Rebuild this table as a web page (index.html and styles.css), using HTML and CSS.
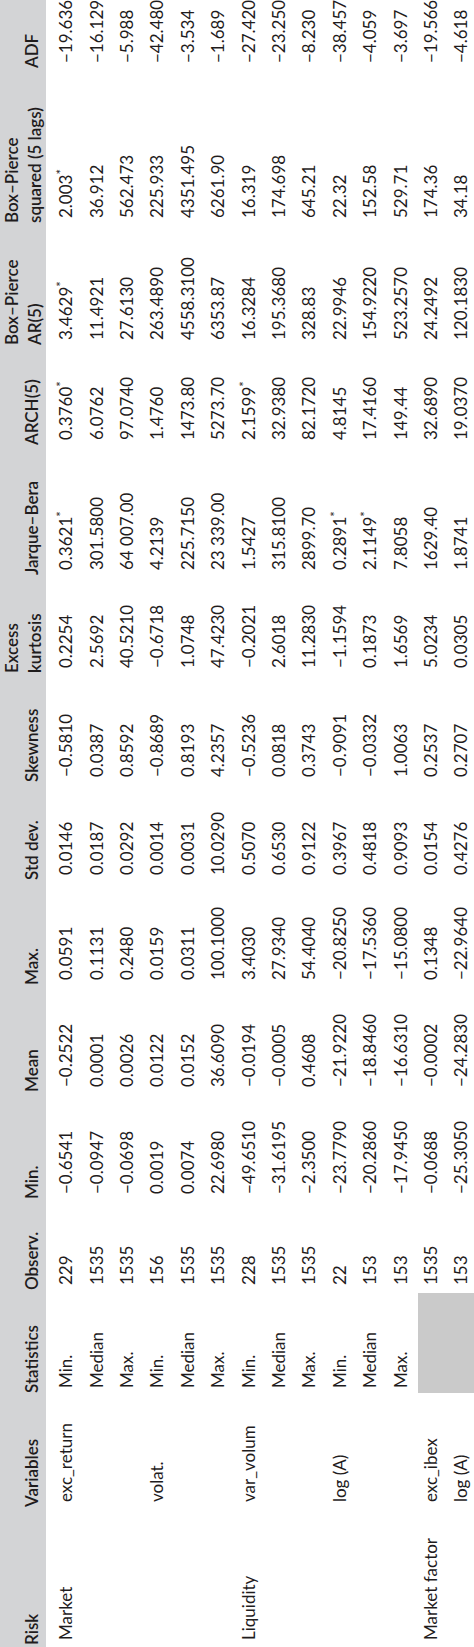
FILE: index.html
```html
<!DOCTYPE html>
<html lang="en">
<head>
<meta charset="utf-8">
<title>Descriptive statistics</title>
<link rel="stylesheet" href="styles.css">
</head>
<body>
<div class="page">
  <table class="stats">
    <colgroup>
      <col class="c-risk"><col class="c-var"><col class="c-stat"><col class="c-obs">
      <col class="c-min"><col class="c-mean"><col class="c-max"><col class="c-std">
      <col class="c-skew"><col class="c-kurt"><col class="c-jb"><col class="c-arch">
      <col class="c-bpar"><col class="c-bpsq"><col class="c-adf">
    </colgroup>
    <thead>
      <tr>
        <th>Risk</th><th>Variables</th><th>Statistics</th><th>Observ.</th>
        <th>Min.</th><th>Mean</th><th>Max.</th><th>Std dev.</th>
        <th>Skewness</th><th class="two">Excess<br>kurtosis</th><th>Jarque–Bera</th><th>ARCH(5)</th>
        <th class="two">Box–Pierce<br>AR(5)</th><th class="two">Box–Pierce<br>squared (5 lags)</th><th>ADF</th>
      </tr>
    </thead>
    <tbody>
      <tr><td>Market</td><td>exc_return</td><td>Min.</td><td>229</td><td>−0.6541</td><td>−0.2522</td><td>0.0591</td><td>0.0146</td><td>−0.5810</td><td>0.2254</td><td>0.3621<sup>*</sup></td><td>0.3760<sup>*</sup></td><td>3.4629<sup>*</sup></td><td>2.003<sup>*</sup></td><td>−19.636</td></tr>
      <tr><td></td><td></td><td>Median</td><td>1535</td><td>−0.0947</td><td>0.0001</td><td>0.1131</td><td>0.0187</td><td>0.0387</td><td>2.5692</td><td>301.5800</td><td>6.0762</td><td>11.4921</td><td>36.912</td><td>−16.129</td></tr>
      <tr><td></td><td></td><td>Max.</td><td>1535</td><td>−0.0698</td><td>0.0026</td><td>0.2480</td><td>0.0292</td><td>0.8592</td><td>40.5210</td><td>64 007.00</td><td>97.0740</td><td>27.6130</td><td>562.473</td><td>−5.988</td></tr>
      <tr><td></td><td>volat.</td><td>Min.</td><td>156</td><td>0.0019</td><td>0.0122</td><td>0.0159</td><td>0.0014</td><td>−0.8689</td><td>−0.6718</td><td>4.2139</td><td>1.4760</td><td>263.4890</td><td>225.933</td><td>−42.480</td></tr>
      <tr><td></td><td></td><td>Median</td><td>1535</td><td>0.0074</td><td>0.0152</td><td>0.0311</td><td>0.0031</td><td>0.8193</td><td>1.0748</td><td>225.7150</td><td>1473.80</td><td>4558.3100</td><td>4351.495</td><td>−3.534</td></tr>
      <tr><td></td><td></td><td>Max.</td><td>1535</td><td>22.6980</td><td>36.6090</td><td>100.1000</td><td>10.0290</td><td>4.2357</td><td>47.4230</td><td>23 339.00</td><td>5273.70</td><td>6353.87</td><td>6261.90</td><td>−1.689</td></tr>
      <tr><td>Liquidity</td><td>var_volum</td><td>Min.</td><td>228</td><td>−49.6510</td><td>−0.0194</td><td>3.4030</td><td>0.5070</td><td>−0.5236</td><td>−0.2021</td><td>1.5427</td><td>2.1599<sup>*</sup></td><td>16.3284</td><td>16.319</td><td>−27.420</td></tr>
      <tr><td></td><td></td><td>Median</td><td>1535</td><td>−31.6195</td><td>−0.0005</td><td>27.9340</td><td>0.6530</td><td>0.0818</td><td>2.6018</td><td>315.8100</td><td>32.9380</td><td>195.3680</td><td>174.698</td><td>−23.250</td></tr>
      <tr><td></td><td></td><td>Max.</td><td>1535</td><td>−2.3500</td><td>0.4608</td><td>54.4040</td><td>0.9122</td><td>0.3743</td><td>11.2830</td><td>2899.70</td><td>82.1720</td><td>328.83</td><td>645.21</td><td>−8.230</td></tr>
      <tr><td></td><td>log (A)</td><td>Min.</td><td>22</td><td>−23.7790</td><td>−21.9220</td><td>−20.8250</td><td>0.3967</td><td>−0.9091</td><td>−1.1594</td><td>0.2891<sup>*</sup></td><td>4.8145</td><td>22.9946</td><td>22.32</td><td>−38.457</td></tr>
      <tr><td></td><td></td><td>Median</td><td>153</td><td>−20.2860</td><td>−18.8460</td><td>−17.5360</td><td>0.4818</td><td>−0.0332</td><td>0.1873</td><td>2.1149<sup>*</sup></td><td>17.4160</td><td>154.9220</td><td>152.58</td><td>−4.059</td></tr>
      <tr><td></td><td></td><td>Max.</td><td>153</td><td>−17.9450</td><td>−16.6310</td><td>−15.0800</td><td>0.9093</td><td>1.0063</td><td>1.6569</td><td>7.8058</td><td>149.44</td><td>523.2570</td><td>529.71</td><td>−3.697</td></tr>
      <tr><td>Market factor</td><td>exc_ibex</td><td class="blank" rowspan="2"></td><td>1535</td><td>−0.0688</td><td>−0.0002</td><td>0.1348</td><td>0.0154</td><td>0.2537</td><td>5.0234</td><td>1629.40</td><td>32.6890</td><td>24.2492</td><td>174.36</td><td>−19.566</td></tr>
      <tr><td></td><td>log (A)</td><td>153</td><td>−25.3050</td><td>−24.2830</td><td>−22.9640</td><td>0.4276</td><td>0.2707</td><td>0.0305</td><td>1.8741</td><td>19.0370</td><td>120.1830</td><td>34.18</td><td>−4.618</td></tr>
    </tbody>
  </table>
</div>
</body>
</html>
```
FILE: styles.css
```css
html, body {
  margin: 0;
  padding: 0;
  background: #ffffff;
}

.page {
  width: 474px;
  height: 1647px;
  overflow: hidden;
  background: #ffffff;
}

.stats {
  border-collapse: collapse;
  border-spacing: 0;
  table-layout: fixed;
  width: 1677px;
  transform-origin: 0 0;
  transform: translateY(1648px) rotate(-90deg);
  font-family: Lato, "Noto Sans", "DejaVu Sans", sans-serif;
  font-size: 17px;
  color: #1f1c1d;
}

.c-risk { width: 138px; }
.c-var  { width: 114px; }
.c-stat { width: 103px; }
.c-obs  { width: 91px; }
.c-min  { width: 107px; }
.c-mean { width: 107px; }
.c-max  { width: 105px; }
.c-std  { width: 98px; }
.c-skew { width: 109px; }
.c-kurt { width: 98px; }
.c-jb   { width: 130px; }
.c-arch { width: 100px; }
.c-bpar { width: 122px; }
.c-bpsq { width: 155px; }
.c-adf  { width: 100px; }

.stats thead tr {
  height: 43px;
}

.stats th {
  background: #d3d4d6;
  text-align: left;
  vertical-align: bottom;
  font-weight: 600;
  line-height: 23px;
  padding: 0 0 3px 3px;
  white-space: nowrap;
}

.stats th.two {
  padding-bottom: 0;
}

.stats tbody tr {
  height: 30.4px;
}

.stats tbody tr:first-child {
  height: 35.6px;
}

.stats td {
  text-align: left;
  vertical-align: top;
  line-height: 30.4px;
  padding: 0 0 0 8px;
  white-space: nowrap;
}

.stats tbody tr:first-child td {
  padding-top: 5.2px;
}

.stats td.blank {
  background: #cacaca;
  box-shadow: inset 3px 2px 0 #ffffff, inset 0 -1px 0 #ffffff;
}

.stats sup {
  font-size: 13px;
  line-height: 0;
  vertical-align: 6px;
}
```
